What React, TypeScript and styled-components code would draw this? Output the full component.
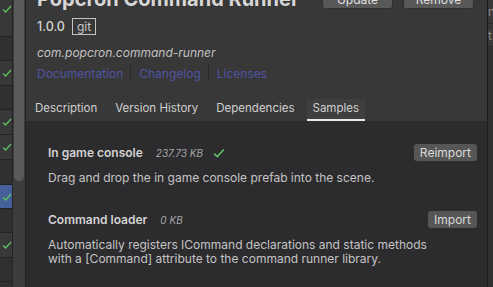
import React from "react";
import styled, { createGlobalStyle } from "styled-components";

const Global = createGlobalStyle`
  html, body { margin: 0; padding: 0; background: #383838; }
  body { font-family: Inter, "Noto Sans", sans-serif; }
  * { box-sizing: border-box; }
`;

const Root = styled.div`
  display: flex;
  width: 493px;
  height: 287px;
  overflow: hidden;
  background: #383838;
  font-family: Inter, "Noto Sans", sans-serif;
  font-size: 12px;
  color: #c4c4c4;
`;

const List = styled.div`
  width: 12px;
  display: flex;
  flex-direction: column;
  flex-shrink: 0;
  overflow: hidden;
`;

const ListRow = styled.div<{ $h: number; $checked?: boolean; $selected?: boolean; $top?: boolean }>`
  height: ${(p) => p.$h}px;
  flex-shrink: 0;
  display: flex;
  align-items: ${(p) => (p.$top ? "flex-start" : "center")};
  padding-top: ${(p) => (p.$top ? "5px" : "0")};
  border-bottom: 1px solid #232323;
  background: ${(p) => (p.$selected ? "#46609a" : p.$checked ? "#383838" : "#303030")};
`;

const CheckSlot = styled.span`
  margin-left: 2px;
  display: flex;
`;

const Gap = styled.div`
  width: 1px;
  flex-shrink: 0;
  background: #232323;
`;

const Scroll = styled.div`
  width: 12px;
  flex-shrink: 0;
  background: #3d3d3d;
  display: flex;
  flex-direction: column;
  padding: 0 1px;
`;

const Thumb = styled.div`
  height: 181px;
  background: #5a5a5a;
  border-radius: 0 0 5px 5px;
`;

const Divider = styled.div`
  width: 1px;
  flex-shrink: 0;
  background: #232323;
`;

const Main = styled.div`
  flex: 1;
  min-width: 0;
  display: flex;
  flex-direction: column;
`;

const Header = styled.div`
  background: #383838;
  padding: 0 13px 0 11px;
  display: flex;
  flex-direction: column;
`;

const TitleRow = styled.div`
  display: flex;
  align-items: flex-start;
  margin-top: -13px;
  height: 25px;
`;

const Title = styled.div`
  flex: 1;
  font-size: 20px;
  line-height: 24px;
  font-weight: 700;
  color: #d6d6d6;
  white-space: nowrap;
`;

const Buttons = styled.div`
  display: flex;
  gap: 10px;
  margin-top: 2px;
`;

const HeaderButton = styled.div`
  width: 71px;
  height: 20px;
  border-radius: 3px;
  background: #585858;
  border: 1px solid #303030;
  color: #e0e0e0;
  font-size: 12px;
  display: flex;
  align-items: center;
  justify-content: center;
`;

const VersionRow = styled.div`
  display: flex;
  align-items: center;
  gap: 7px;
  margin-top: 6px;
  height: 17px;
`;

const Version = styled.span`
  font-size: 12.5px;
  font-weight: 500;
  color: #d4d4d4;
`;

const Badge = styled.span`
  height: 17px;
  padding: 0 4px;
  border: 1px solid #c4c4c4;
  color: #c8c8c8;
  font-size: 12px;
  display: flex;
  align-items: center;
`;

const PackageName = styled.div`
  margin-top: 10px;
  font-style: italic;
  font-size: 12px;
  line-height: 15px;
  color: #c2c2c2;
`;

const Links = styled.div`
  display: flex;
  align-items: center;
  margin-top: 5px;
  height: 16px;
`;

const Link = styled.span<{ $first?: boolean }>`
  color: #4f54a4;
  font-size: 12px;
  padding: 0 7px 0 ${(p) => (p.$first ? "0" : "8px")};
`;

const LinkSep = styled.span`
  width: 1px;
  height: 16px;
  background: #2a2a2a;
`;

const TabBar = styled.div`
  margin-top: 11px;
  height: 29px;
  display: flex;
  align-items: flex-end;
  gap: 6px;
  padding-left: 3px;
  background: #383838;
`;

const Tab = styled.div<{ $active?: boolean }>`
  height: 22px;
  padding: 0 6px 2px;
  display: flex;
  align-items: center;
  font-size: 11.5px;
  color: #d0d0d0;
  background: ${(p) => (p.$active ? "#3f3f3f" : "transparent")};
  border-bottom: 2px solid ${(p) => (p.$active ? "#e8e8e8" : "transparent")};
`;

const Content = styled.div`
  flex: 1;
  background: #2c2b2e;
  padding: 23px 10px 0 22px;
  display: flex;
  flex-direction: column;
  gap: 26px;
`;

const Sample = styled.div`
  display: flex;
  flex-direction: column;
`;

const SampleHead = styled.div`
  display: flex;
  align-items: center;
  height: 17px;
`;

const SampleName = styled.span`
  font-weight: 600;
  font-size: 12px;
  color: #d2d2d2;
`;

const Size = styled.span`
  font-style: italic;
  font-size: 10px;
  color: #a8a8a8;
  margin-left: 13px;
`;

const CheckWrap = styled.span`
  margin-left: 10px;
  display: flex;
`;

const Spacer = styled.div`
  flex: 1;
`;

const SmallButton = styled.div`
  height: 17px;
  padding: 0 6px;
  border-radius: 3px;
  background: #565656;
  color: #dadada;
  font-size: 12px;
  display: flex;
  align-items: center;
`;

const Desc = styled.div`
  margin-top: 10px;
  font-size: 12px;
  line-height: 14px;
  color: #c4c4c4;
`;

const RightDivider = styled.div`
  width: 1px;
  flex-shrink: 0;
  background: #1c1c1c;
`;

const RightPanel = styled.div`
  width: 5px;
  flex-shrink: 0;
  display: flex;
  flex-direction: column;
  overflow: hidden;
  background: #303030;
`;

const RightRow = styled.div<{ $h: number }>`
  height: ${(p) => p.$h}px;
  flex-shrink: 0;
  background: #383838;
  border-bottom: 1px solid #2a2a2a;
  color: #8a8a8a;
  font-size: 12px;
  white-space: nowrap;
  display: flex;
  align-items: center;
  overflow: hidden;
`;

const CheckIcon = ({ color = "#5fbf5f", w = 10, h = 8 }: { color?: string; w?: number; h?: number }) => (
  <svg width={w} height={h} viewBox="0 0 10 8">
    <path d="M1 4.5 L3.6 7 L9 1" fill="none" stroke={color} strokeWidth="1.3" />
  </svg>
);

const rows = [
  { h: 37, checked: true, top: true },
  { h: 24 },
  { h: 25, checked: true },
  { h: 24 },
  { h: 25, checked: true },
  { h: 25, checked: true },
  { h: 25 },
  { h: 24, checked: true, selected: true },
  { h: 24 },
  { h: 25, checked: true },
  { h: 24 },
  { h: 25 },
];

export default function App() {
  return (
    <>
      <Global />
      <Root>
        <List>
          {rows.map((r, i) => (
            <ListRow key={i} $h={r.h} $checked={r.checked} $selected={r.selected} $top={r.top}>
              {r.checked && (
                <CheckSlot>
                  <CheckIcon />
                </CheckSlot>
              )}
            </ListRow>
          ))}
        </List>
        <Gap />
        <Scroll>
          <Thumb />
        </Scroll>
        <Divider />
        <Main>
          <Header>
            <TitleRow>
              <Title>Popcron Command Runner</Title>
              <Buttons>
                <HeaderButton>Update</HeaderButton>
                <HeaderButton>Remove</HeaderButton>
              </Buttons>
            </TitleRow>
            <VersionRow>
              <Version>1.0.0</Version>
              <Badge>git</Badge>
            </VersionRow>
            <PackageName>com.popcron.command-runner</PackageName>
            <Links>
              <Link $first>Documentation</Link>
              <LinkSep />
              <Link>Changelog</Link>
              <LinkSep />
              <Link>Licenses</Link>
            </Links>
          </Header>
          <TabBar>
            <Tab>Description</Tab>
            <Tab>Version History</Tab>
            <Tab>Dependencies</Tab>
            <Tab $active>Samples</Tab>
          </TabBar>
          <Content>
            <Sample>
              <SampleHead>
                <SampleName>In game console</SampleName>
                <Size>237.73 KB</Size>
                <CheckWrap>
                  <CheckIcon color="#66c266" w={12} h={10} />
                </CheckWrap>
                <Spacer />
                <SmallButton>Reimport</SmallButton>
              </SampleHead>
              <Desc>Drag and drop the in game console prefab into the scene.</Desc>
            </Sample>
            <Sample>
              <SampleHead>
                <SampleName>Command loader</SampleName>
                <Size>0 KB</Size>
                <Spacer />
                <SmallButton>Import</SmallButton>
              </SampleHead>
              <Desc>
                Automatically registers ICommand declarations and static methods
                <br />
                with a [Command] attribute to the command runner library.
              </Desc>
            </Sample>
          </Content>
        </Main>
        <RightDivider />
        <RightPanel>
          <RightRow $h={24}>n</RightRow>
          <RightRow $h={23}>t</RightRow>
        </RightPanel>
      </Root>
    </>
  );
}
